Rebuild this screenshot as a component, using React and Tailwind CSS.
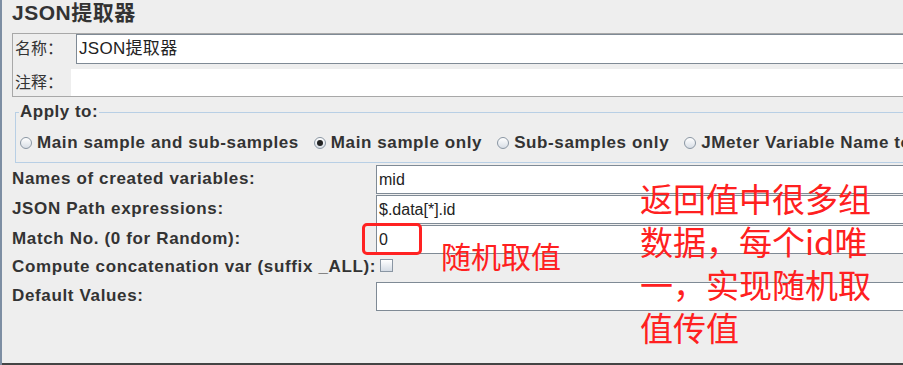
import React from 'react';

const Radio = ({ checked, label }) => (
    <div className="flex items-center mr-[15px] shrink-0">
        <span className="w-[12px] h-[12px] rounded-full border border-[#8a96a3] bg-gradient-to-b from-[#ffffff] to-[#d8dee6] flex items-center justify-center mr-[5px]">
            {checked && <span className="w-[6px] h-[6px] rounded-full bg-[#222]" />}
        </span>
        <span className="text-[17px] tracking-[0.6px] font-bold text-[#333] whitespace-nowrap">{label}</span>
    </div>
);

const FieldRow = ({ label, value, h = 'h-[30px]', children }) => (
    <div className={`flex items-stretch ${h}`}>
        <div className="w-[364px] shrink-0 flex items-center pb-[2px] text-[17px] tracking-[0.65px] font-bold text-[#333] whitespace-nowrap">{label}</div>
        {children || (
            <div className="flex-1 bg-white border border-[#7f8a95] flex items-center pl-[2px] text-[16px] text-[#222]">{value}</div>
        )}
    </div>
);

const App = () => (
    <div className="relative w-[903px] h-[365px] overflow-hidden bg-[#eeeeee] border-l-2 border-[#7d8ea3] font-['Liberation_Sans',Arial,'Noto_Sans_CJK_SC',sans-serif]">
        <div className="w-[930px] h-[363px] pl-[10px]">
            <h1 className="h-[33px] pt-[1px] text-[21px] tracking-[0.5px] font-bold text-[#333] leading-[24px]">JSON提取器</h1>

            <div className="border border-[#a8a8a8] h-[64px] flex flex-col">
                <div className="flex items-center h-[31px]">
                    <span className="w-[63px] pl-[2px] text-[16px] text-[#333]">名称：</span>
                    <div className="flex-1 h-[30px] bg-white border-t border-l border-b border-[#7f8a95] flex items-center pl-[2px] text-[17px] tracking-[0.3px] text-[#222]">JSON提取器</div>
                </div>
                <div className="flex items-center mt-[5px] h-[27px]">
                    <span className="w-[58px] pl-[2px] text-[16px] text-[#333]">注释：</span>
                    <div className="flex-1 h-[27px] bg-white" />
                </div>
            </div>

            <fieldset className="ml-[3px] mt-[6px] h-[60px] border border-[#b8cfe5] px-[3px] pb-0">
                <legend className="px-[1px] text-[17px] tracking-[0.5px] font-bold text-[#333] leading-[18px]">Apply to:</legend>
                <div className="flex items-center h-[40px] pt-[4px] pl-[1px]">
                    <Radio label="Main sample and sub-samples" />
                    <Radio checked label="Main sample only" />
                    <Radio label="Sub-samples only" />
                    <Radio label="JMeter Variable Name to use" />
                </div>
            </fieldset>

            <div className="mt-[2px] flex flex-col">
                <FieldRow label="Names of created variables:" value="mid" h="h-[29px]" />
                <div className="h-[1px]" />
                <FieldRow label="JSON Path expressions:" value="$.data[*].id" h="h-[29px]" />
                <div className="h-[1px]" />
                <FieldRow label="Match No. (0 for Random):" value="0" h="h-[29px]" />
                <FieldRow label="Compute concatenation var (suffix _ALL):" h="h-[28px]">
                    <div className="flex items-center ml-[4px] pb-[5px]">
                        <span className="w-[13px] h-[13px] border border-[#8a96a3] bg-gradient-to-b from-[#ffffff] to-[#d5dce5]" />
                    </div>
                </FieldRow>
                <FieldRow label="Default Values:" value="" h="h-[29px]" />
            </div>
        </div>
        <div className="h-[2px] bg-[#444]" />

        <div className="absolute left-[360px] top-[223px] w-[60px] h-[32px] border-[3px] border-[#ff2222] rounded-[5px]" />
        <div className="absolute left-[439px] top-[236px] text-[30px] leading-[38px] text-[#ff2020] font-['Noto_Sans_CJK_SC',sans-serif]">随机取值</div>
        <div className="absolute left-[638px] top-[177px] w-[250px] text-[33px] leading-[43px] text-[#ff2020] font-['Noto_Sans_CJK_SC',sans-serif]">
            <div>返回值中很多组</div>
            <div>数据，每个id唯</div>
            <div>一，实现随机取</div>
            <div>值传值</div>
        </div>
    </div>
);

export default App;
